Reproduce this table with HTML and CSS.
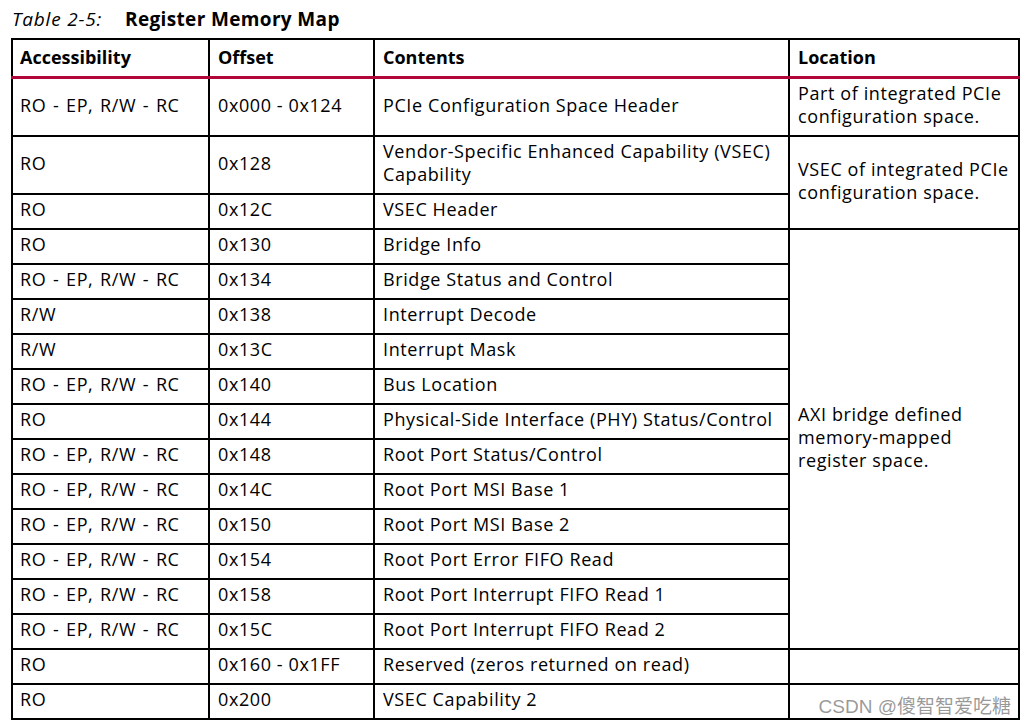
FILE: index.html
```html
<!DOCTYPE html>
<html>
<head>
<meta charset="utf-8">
<link rel="stylesheet" href="styles.css">
</head>
<body>
<div class="page">
  <div class="caption"><span class="cap-num">Table 2-5:</span><span class="cap-title">Register Memory Map</span></div>
  <table class="map">
    <colgroup>
      <col class="c1"><col class="c2"><col class="c3"><col class="c4">
    </colgroup>
    <thead>
      <tr><th>Accessibility</th><th>Offset</th><th>Contents</th><th>Location</th></tr>
    </thead>
    <tbody>
      <tr class="tall"><td>RO - EP, R/W - RC</td><td>0x000 - 0x124</td><td>PCIe Configuration Space Header</td><td>Part of integrated PCIe configuration space.</td></tr>
      <tr class="tall"><td>RO</td><td>0x128</td><td>Vendor-Specific Enhanced Capability (VSEC) Capability</td><td rowspan="2" class="tight">VSEC of integrated PCIe configuration space.</td></tr>
      <tr><td>RO</td><td>0x12C</td><td>VSEC Header</td></tr>
      <tr><td>RO</td><td>0x130</td><td>Bridge Info</td><td rowspan="12">AXI bridge defined memory-mapped register space.</td></tr>
      <tr><td>RO - EP, R/W - RC</td><td>0x134</td><td>Bridge Status and Control</td></tr>
      <tr><td>R/W</td><td>0x138</td><td>Interrupt Decode</td></tr>
      <tr><td>R/W</td><td>0x13C</td><td>Interrupt Mask</td></tr>
      <tr><td>RO - EP, R/W - RC</td><td>0x140</td><td>Bus Location</td></tr>
      <tr><td>RO</td><td>0x144</td><td>Physical-Side Interface (PHY) Status/Control</td></tr>
      <tr><td>RO - EP, R/W - RC</td><td>0x148</td><td>Root Port Status/Control</td></tr>
      <tr><td>RO - EP, R/W - RC</td><td>0x14C</td><td>Root Port MSI Base 1</td></tr>
      <tr><td>RO - EP, R/W - RC</td><td>0x150</td><td>Root Port MSI Base 2</td></tr>
      <tr><td>RO - EP, R/W - RC</td><td>0x154</td><td>Root Port Error FIFO Read</td></tr>
      <tr><td>RO - EP, R/W - RC</td><td>0x158</td><td>Root Port Interrupt FIFO Read 1</td></tr>
      <tr><td>RO - EP, R/W - RC</td><td>0x15C</td><td>Root Port Interrupt FIFO Read 2</td></tr>
      <tr><td>RO</td><td>0x160 - 0x1FF</td><td>Reserved (zeros returned on read)</td><td></td></tr>
      <tr><td>RO</td><td>0x200</td><td>VSEC Capability 2</td><td></td></tr>
    </tbody>
  </table>
  <div class="watermark">CSDN @傻智智爱吃糖</div>
</div>
</body>
</html>
```
FILE: styles.css
```css
html, body {
  margin: 0;
  padding: 0;
  background: #fff;
}
body {
  font-family: "Open Sans", "Noto Sans", sans-serif;
  color: #000;
}
.page {
  position: relative;
  width: 1026px;
  height: 725px;
  padding: 6px 0 0 11px;
  box-sizing: border-box;
  overflow: hidden;
}
.caption {
  font-size: 19px;
  line-height: 26px;
  height: 32px;
  display: flex;
  align-items: flex-start;
}
.cap-num {
  font-style: italic;
  width: 113px;
  padding-left: 1px;
  letter-spacing: 0.8px;
}
.cap-title {
  font-weight: 700;
  letter-spacing: 0.35px;
}
.map {
  border-collapse: collapse;
  table-layout: fixed;
  width: 1007px;
  font-size: 18px;
  line-height: 23px;
  letter-spacing: 0.6px;
}
.c1 { width: 197px; }
.c2 { width: 165px; }
.c3 { width: 415px; }
.c4 { width: 230px; }
.map th, .map td {
  border: 2px solid #000;
  padding: 3px 6px 7px 8px;
  vertical-align: middle;
  text-align: left;
  height: 23px;
}
.map td:first-child {
  padding-left: 7px;
  word-spacing: 1.4px;
}
.map th {
  font-weight: 700;
  letter-spacing: 0;
  padding: 5px 9px 7px 8px;
  border-bottom: 3px solid #b1063a;
  height: 24px;
}
.map th:first-child {
  padding-left: 7px;
}
.watermark {
  position: absolute;
  right: 15px;
  bottom: 7px;
  font-family: "Liberation Sans", "Noto Sans CJK SC", sans-serif;
  font-size: 19px;
  color: rgba(120, 120, 120, 0.75);
  line-height: 22px;
}
```
